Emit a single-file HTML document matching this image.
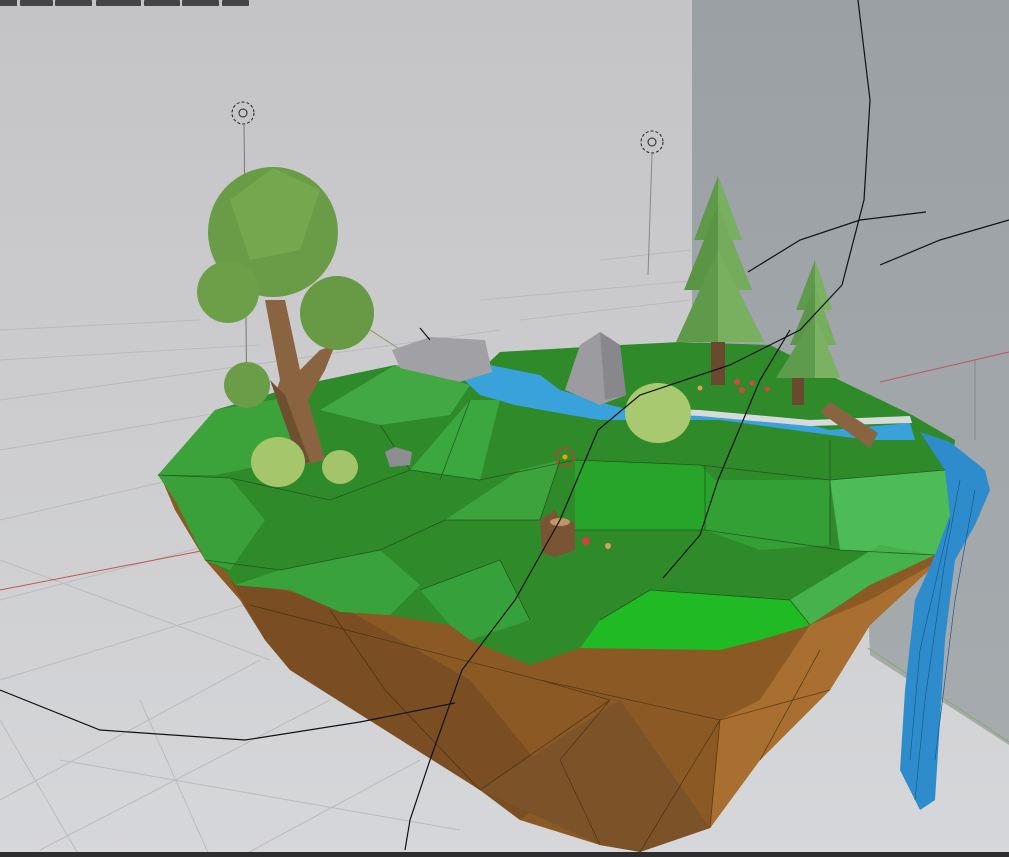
<!DOCTYPE html>
<html><head><meta charset="utf-8"><style>
html,body{margin:0;padding:0;width:1009px;height:857px;overflow:hidden;background:#c9c9cb}
svg{display:block}
</style></head><body>
<svg width="1009" height="857" viewBox="0 0 1009 857" xmlns="http://www.w3.org/2000/svg">
<defs>
<linearGradient id="bg" x1="0" y1="0" x2="0" y2="1"><stop offset="0" stop-color="#c4c4c6"/><stop offset="0.5" stop-color="#cdcdcf"/><stop offset="1" stop-color="#d6d7da"/></linearGradient>
<linearGradient id="wall" x1="0" y1="0" x2="0" y2="1"><stop offset="0" stop-color="#9aa0a4"/><stop offset="1" stop-color="#a6abae"/></linearGradient>
</defs>
<rect width="1009" height="857" fill="url(#bg)"/>
<g stroke="#b9b9bc" stroke-width="1" fill="none" opacity="0.9">
<path d="M0 400 L500 330 M0 450 L470 370 M0 520 L300 450 M0 600 L230 540 M0 680 L260 600"/>
<path d="M0 330 L200 320 M0 360 L260 345 M40 850 L330 700 M240 857 L420 760 M0 800 L260 660"/>
<path d="M480 300 L700 280 M520 320 L690 300 M600 260 L690 250"/>
<path d="M0 560 L270 660 M60 760 L460 830 M0 720 L80 857 M140 700 L210 857"/>
</g>
<polygon points="692,0 1009,0 1009,745 870,655 860,420 692,340" fill="url(#wall)"/>
<line x1="0" y1="590" x2="232" y2="545" stroke="#c25555" stroke-width="1"/>
<line x1="880" y1="382" x2="1009" y2="352" stroke="#c25555" stroke-width="1"/>
<line x1="868" y1="648" x2="1009" y2="742" stroke="#8aa86a" stroke-width="1"/>
<line x1="370" y1="330" x2="398" y2="348" stroke="#7fa050" stroke-width="1"/>
<circle cx="243" cy="113" r="11" fill="none" stroke="#222" stroke-width="1" stroke-dasharray="3 2"/>
<circle cx="243" cy="113" r="4" fill="none" stroke="#222"/>
<line x1="244" y1="125" x2="248" y2="520" stroke="#777" stroke-width="1"/>
<circle cx="652" cy="142" r="11" fill="none" stroke="#222" stroke-width="1" stroke-dasharray="3 2"/>
<circle cx="652" cy="142" r="4" fill="none" stroke="#222"/>
<line x1="652" y1="154" x2="648" y2="275" stroke="#888" stroke-width="1"/>
<line x1="975" y1="360" x2="975" y2="440" stroke="#888" stroke-width="1"/>
<polygon points="160,475 175,510 205,560 240,600 265,640 290,670 480,790 520,820 600,845 640,852 710,828 760,760 830,690 870,625 940,560 950,480" fill="#8b5a24"/>
<polygon points="230,580 265,640 290,670 480,790 520,820 560,790 470,680 330,600" fill="#7a4e22"/>
<polygon points="710,828 760,760 830,690 870,625 940,560 870,600 810,625 760,700 720,720" fill="#a86f30"/>
<polygon points="480,790 600,845 640,852 710,828 620,700" fill="#7c5228"/>
<g stroke="#3d2810" stroke-width="0.8" fill="none" opacity="0.7">
<path d="M250 605 L540 680 L720 720 L830 690 M330 610 L385 690 L480 790 M540 680 L610 700 L480 790 M610 700 L560 760 L600 845 M720 720 L710 828 M720 720 L640 852 M760 760 L820 650"/>
</g>
<polygon points="158,475 215,410 300,385 395,365 470,380 500,352 620,345 680,342 770,345 835,378 912,415 955,440 950,490 980,515 935,555 870,585 810,625 760,640 720,650 580,648 530,665 470,640 450,625 390,615 340,612 290,590 235,585 225,570 205,560 175,500" fill="#2f8a2a"/>
<g>
<polygon points="158,475 215,410 300,395 290,460 215,475" fill="#3ca23a"/>
<polygon points="175,500 158,475 230,478 265,520 230,570 205,560" fill="#3aa03a"/>
<polygon points="320,410 395,365 470,385 450,415 380,425" fill="#41a844"/>
<polygon points="410,470 470,400 500,400 480,480" fill="#3aa83e"/>
<polygon points="445,520 520,470 560,460 540,520" fill="#3da33d"/>
<polygon points="575,460 700,465 715,480 705,530 575,530" fill="#27a52a"/>
<polygon points="715,480 830,480 830,545 760,550 705,530" fill="#33a036"/>
<polygon points="830,480 945,470 980,515 935,555 840,550" fill="#4dbb56"/>
<polygon points="235,585 290,590 340,612 390,615 420,585 380,550 280,570" fill="#3aa23c"/>
<polygon points="580,648 720,650 760,640 810,625 790,600 650,590 600,620" fill="#1fba24"/>
<polygon points="810,625 870,585 935,555 880,545 790,600" fill="#45b24c"/>
<polygon points="420,590 500,560 530,620 470,640 450,625" fill="#36a13a"/>
</g>
<g stroke="#1c4a18" stroke-width="0.8" fill="none" opacity="0.8">
<path d="M158 475 L230 478 L330 500 L410 470 L480 480 L575 460 L700 465 L830 480 L945 470"/>
<path d="M205 560 L280 570 L380 550 L445 520 L540 520 L575 530 L705 530 L840 550 L935 555"/>
<path d="M300 395 L290 460 M380 425 L410 470 M470 400 L440 480 M560 460 L540 520 M705 465 L705 530 M830 440 L830 545 M600 620 L650 590 L790 600 L810 625 M420 590 L500 560 L530 620"/>
</g>
<polygon points="462,378 490,365 540,375 560,390 610,405 640,412 700,415 810,425 830,430 910,423 915,440 870,440 830,435 720,420 630,420 600,420 570,415 515,405 480,395" fill="#3aa2da"/>
<polygon points="640,408 700,410 810,420 910,416 912,423 810,426 700,416 640,413" fill="#d7dadb"/>
<polygon points="392,350 430,337 485,340 492,372 460,382 400,368" fill="#a1a1a5"/>
<polygon points="565,390 580,345 600,332 620,345 626,395 600,405" fill="#9c9ca0"/>
<polygon points="600,332 620,345 626,395 605,400" fill="#88888c"/>
<polygon points="385,452 395,447 412,452 410,465 390,467" fill="#8e8e92"/>
<polygon points="265,300 280,380 275,395 300,465 325,460 308,400 325,370 335,345 320,350 300,370 285,300" fill="#8a6440"/>
<polygon points="270,380 300,465 310,462 285,395" fill="#6e4f30"/>
<circle cx="273" cy="232" r="65" fill="#6a9b46"/>
<polygon points="230,200 273,168 320,190 300,250 250,260" fill="#7aad52" opacity="0.7"/>
<circle cx="228" cy="292" r="31" fill="#6d9f48"/>
<circle cx="337" cy="313" r="37" fill="#689a45"/>
<circle cx="247" cy="385" r="23" fill="#6b9c47"/>
<ellipse cx="278" cy="462" rx="27" ry="25" fill="#a6c66c"/>
<ellipse cx="340" cy="467" rx="18" ry="17" fill="#a3c46a"/>
<ellipse cx="658" cy="413" rx="33" ry="30" fill="#a8c96f"/>
<rect x="711" y="330" width="14" height="55" fill="#6a4a2e"/>
<polygon points="718,176 742,240 694,240" fill="#5e9a4a"/>
<polygon points="718,205 752,290 684,290" fill="#5a9546"/>
<polygon points="718,250 764,342 676,342" fill="#5e9a4a"/>
<polygon points="718,176 742,240 718,240" fill="#78b060"/>
<polygon points="718,205 752,290 718,290" fill="#74ac5c"/>
<polygon points="718,250 764,342 718,342" fill="#78b060"/>
<rect x="792" y="360" width="12" height="45" fill="#6a4a2e"/>
<polygon points="815,260 832,310 796,310" fill="#5f9b4c"/>
<polygon points="815,285 836,345 790,345" fill="#5a9548"/>
<polygon points="815,315 840,378 776,378" fill="#5f9b4c"/>
<polygon points="815,260 832,310 815,310" fill="#7ab262"/>
<polygon points="815,285 836,345 815,345" fill="#76ae5e"/>
<polygon points="815,315 840,378 815,378" fill="#7ab262"/>
<polygon points="820,412 830,402 878,433 870,448" fill="#8a6440"/>
<polygon points="540,520 555,510 560,520 575,522 575,550 555,557 542,553" fill="#7a5535"/>
<ellipse cx="560" cy="522" rx="10" ry="4" fill="#c49466"/>
<circle cx="586" cy="541" r="4" fill="#d14040"/>
<circle cx="608" cy="546" r="3" fill="#d9a060"/>
<g fill="#d84545"><circle cx="737" cy="382" r="3"/><circle cx="742" cy="390" r="3"/><circle cx="752" cy="383" r="2.5"/><circle cx="767" cy="389" r="2.5"/></g>
<circle cx="700" cy="388" r="2.5" fill="#d9a060"/>
<circle cx="565" cy="457" r="9" fill="none" stroke="#d33" stroke-width="2" stroke-dasharray="4 3"/>
<circle cx="565" cy="457" r="2.5" fill="#f90"/>
<polygon points="920,432 950,442 985,470 990,490 975,525 955,560 945,640 940,720 935,800 920,810 900,770 905,690 915,600 935,555 950,515 945,470" fill="#2f8ccc"/>
<g stroke="#1a5a8a" stroke-width="0.7" fill="none">
<path d="M960 480 L945 560 L925 700 L915 800 M975 490 L955 600 L935 760 M950 520 L920 650 L910 760"/>
</g>
<g stroke="#111" stroke-width="1.2" fill="none">
<path d="M858 0 L870 100 L864 200 L842 285 L800 330 L730 365 L640 395 L598 430 L560 520 L515 600 L462 670 L430 760 L410 820 L405 850"/>
<path d="M926 212 L860 220 L800 240 L748 272"/>
<path d="M1009 220 L940 240 L880 265"/>
<path d="M0 690 L100 730 L245 740 L360 722 L455 703"/>
<path d="M663 578 L700 535 L718 480 L760 380 L790 330"/>
<path d="M420 328 L430 340"/>
</g>
<g fill="#444446">
<rect x="0" y="0" width="17" height="6"/>
<rect x="20" y="0" width="33" height="6" rx="1"/>
<rect x="55" y="0" width="37" height="6" rx="1"/>
<rect x="96" y="0" width="45" height="6" rx="1"/>
<rect x="144" y="0" width="36" height="6" rx="1"/>
<rect x="182" y="0" width="37" height="6" rx="1"/>
<rect x="222" y="0" width="27" height="6" rx="1"/>
</g>
<rect x="0" y="852" width="1009" height="5" fill="#2e2e30"/>
</svg>
</body></html>
